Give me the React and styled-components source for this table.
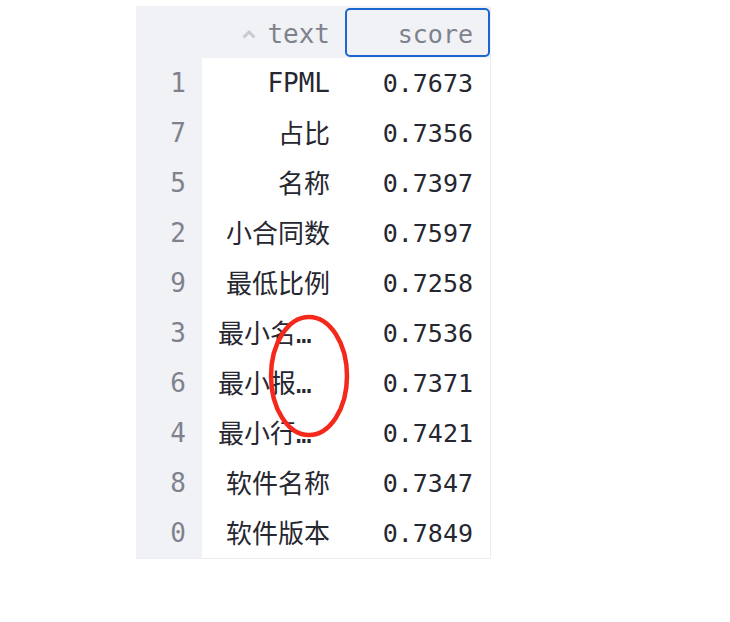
import React from "react";
import styled, { createGlobalStyle } from "styled-components";

const GlobalStyle = createGlobalStyle`
  html, body {
    margin: 0;
    padding: 0;
    background: #ffffff;
  }
`;

const Page = styled.div`
  position: relative;
  width: 730px;
  height: 622px;
  padding: 6px 0 0 136px;
  box-sizing: border-box;
`;

const Grid = styled.div`
  display: grid;
  grid-template-columns: 66px 142px 146px;
  grid-auto-rows: 50px;
  grid-template-rows: 52px;
  width: 355px;
  box-sizing: border-box;
  border-right: 1px solid #eceef3;
  border-bottom: 1px solid #eceef3;
  font-family: "DejaVu Sans Mono", "Noto Sans CJK SC", monospace;
  font-size: 26px;
  color: #262730;
`;

const Cell = styled.div`
  display: flex;
  align-items: center;
  justify-content: flex-end;
  padding: 0 ${(p) => (p.$pad ? p.$pad : 16)}px 0 16px;
  background: ${(p) => (p.$shade ? "#f0f2f6" : "#ffffff")};
  color: ${(p) => (p.$muted ? "#7f828d" : "#262730")};
  font-size: ${(p) => (p.$small ? 25 : 26)}px;
  min-width: 0;
  white-space: nowrap;
  position: relative;
`;

const HeadCell = styled(Cell)`
  background: #f0f2f6;
  color: #7f828d;
  gap: 11px;
  padding-top: 4px;
`;

const FocusRing = styled.div`
  position: absolute;
  inset: 2px 0 1px 1px;
  border: 2px solid #1c66d0;
  border-radius: 5px;
  pointer-events: none;
`;

const Label = styled.span`
  overflow: hidden;
  text-overflow: ellipsis;
  white-space: nowrap;
  position: relative;
  top: ${(p) => (p.$cjk ? -2 : 0)}px;
`;

const Marker = styled.svg`
  position: absolute;
  left: 268px;
  top: 314px;
  pointer-events: none;
`;

const rows = [
  [1, "FPML", "0.7673"],
  [7, "占比", "0.7356"],
  [5, "名称", "0.7397"],
  [2, "小合同数", "0.7597"],
  [9, "最低比例", "0.7258"],
  [3, "最小名称长度", "0.7536"],
  [6, "最小报价金额", "0.7371"],
  [4, "最小行业代码", "0.7421"],
  [8, "软件名称", "0.7347"],
  [0, "软件版本", "0.7849"],
];

const Chevron = () => (
  <svg width="14" height="9" viewBox="0 0 14 9">
    <path d="M1.5 7.5 L7 2 L12.5 7.5" fill="none" stroke="#c9cbd3" strokeWidth="3" />
  </svg>
);

const App = () => {
  return (
    <Page>
      <GlobalStyle />
      <Grid>
        <HeadCell />
        <HeadCell $pad={14}>
          <Chevron />
          <span>text</span>
        </HeadCell>
        <HeadCell $pad={17} $small>
          <span>score</span>
          <FocusRing />
        </HeadCell>
        {rows.map(([idx, text, score]) => (
          <React.Fragment key={idx}>
            <Cell $shade $muted>{idx}</Cell>
            <Cell $pad={14}>
              <Label $cjk={/[^\x00-\x7f]/.test(text)}>{text}</Label>
            </Cell>
            <Cell $pad={17} $small>{score}</Cell>
          </React.Fragment>
        ))}
      </Grid>
      <Marker width="84" height="126" viewBox="0 0 84 126">
        <ellipse cx="41" cy="62" rx="38" ry="59" fill="none" stroke="#f5281c" strokeWidth="4.5" />
      </Marker>
    </Page>
  );
};

export default App;
